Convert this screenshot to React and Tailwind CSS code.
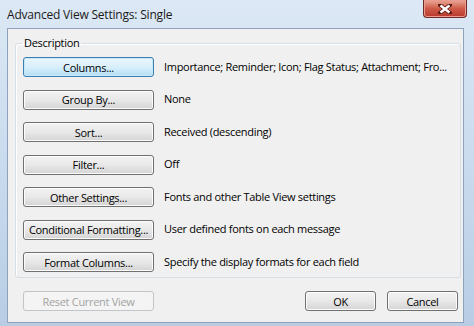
import React from 'react';

const rows = [
  { label: 'Columns...', text: 'Importance; Reminder; Icon; Flag Status; Attachment; Fro...', focused: true },
  { label: 'Group By...', text: 'None' },
  { label: 'Sort...', text: 'Received (descending)' },
  { label: 'Filter...', text: 'Off' },
  { label: 'Other Settings...', text: 'Fonts and other Table View settings' },
  { label: 'Conditional Formatting...', text: 'User defined fonts on each message' },
  { label: 'Format Columns...', text: 'Specify the display formats for each field' },
];

function WinButton({ children, width = 'w-[131px]', focused, disabled }) {
  if (disabled) {
    return (
      <button
        disabled
        className={`${width} h-[20px] shrink-0 whitespace-nowrap rounded-[3px] border border-[#c2c5c8] bg-[#f4f4f4] text-[#a3a3a3] leading-none`}
      >
        {children}
      </button>
    );
  }
  if (focused) {
    return (
      <button
        className={`${width} h-[20px] shrink-0 whitespace-nowrap rounded-[3px] border border-[#3c7fb1] bg-gradient-to-b from-[#eaf6fd] via-[#d9f0fc] to-[#b4def5] text-black leading-none shadow-[inset_0_0_0_1px_#c8e8f8]`}
      >
        {children}
      </button>
    );
  }
  return (
    <button
      className={`${width} h-[20px] shrink-0 whitespace-nowrap rounded-[3px] border border-[#707070] bg-gradient-to-b from-[#f3f3f3] via-[#e8e8e8] to-[#d4d4d4] text-black leading-none shadow-[inset_0_0_0_1px_#fcfcfc]`}
    >
      {children}
    </button>
  );
}

export default function App() {
  return (
    <div className="w-[474px] h-[326px] overflow-hidden bg-gradient-to-b from-[#dce8f5] via-[#c9dbee] to-[#b8cde4] flex flex-col font-['Open_Sans',sans-serif] text-[11px] tracking-[-0.3px] text-black">
      {/* Title bar */}
      <div className="h-[28px] flex items-start justify-between">
        <div className="pl-[7px] pt-[7px] leading-[16px] text-[12px] tracking-[-0.2px] text-[#1a1a1a]">Advanced View Settings: Single</div>
        <div className="mr-[7px] w-[44px] h-[18px] rounded-b-[4px] border border-t-0 border-[#6e2a24] bg-gradient-to-b from-[#e9a99a] via-[#cf5a48] to-[#b8372c] flex items-center justify-center shadow-[inset_0_0_0_1px_#eb9c8e]">
          <svg width="14" height="10" viewBox="0 0 14 10">
            <path d="M2 1 L12 9 M12 1 L2 9" stroke="#5a1a14" strokeWidth="4" strokeLinecap="square" />
            <path d="M2.5 1.5 L11.5 8.5 M11.5 1.5 L2.5 8.5" stroke="#ffffff" strokeWidth="2.4" />
          </svg>
        </div>
      </div>

      {/* Client area */}
      <div className="ml-[7px] w-[457px] h-[295px] border border-[#8ea3bb] bg-[#f0f0f0] flex flex-col">
        <fieldset className="ml-[7px] mt-[6px] w-[446px] min-w-0 h-[243px] border border-[#d5dfe5] rounded-[3px] shadow-[inset_1px_1px_0_#fff] px-[7px]">
          <legend className="ml-[-1px] px-[2px] leading-[16px]">Description</legend>
          <div className="mt-[6px] flex flex-col gap-[12.5px]">
            {rows.map((r) => (
              <div key={r.label} className="flex items-center gap-[10px]">
                <WinButton focused={r.focused}>{r.label}</WinButton>
                <span className="whitespace-nowrap">{r.text}</span>
              </div>
            ))}
          </div>
        </fieldset>

        <div className="mt-[13px] px-[15px] flex items-center">
          <WinButton disabled>Reset Current View</WinButton>
          <div className="ml-auto flex gap-[11px] mr-[-10px]">
            <WinButton width="w-[71px]">OK</WinButton>
            <WinButton width="w-[71px]">Cancel</WinButton>
          </div>
        </div>
      </div>
    </div>
  );
}
